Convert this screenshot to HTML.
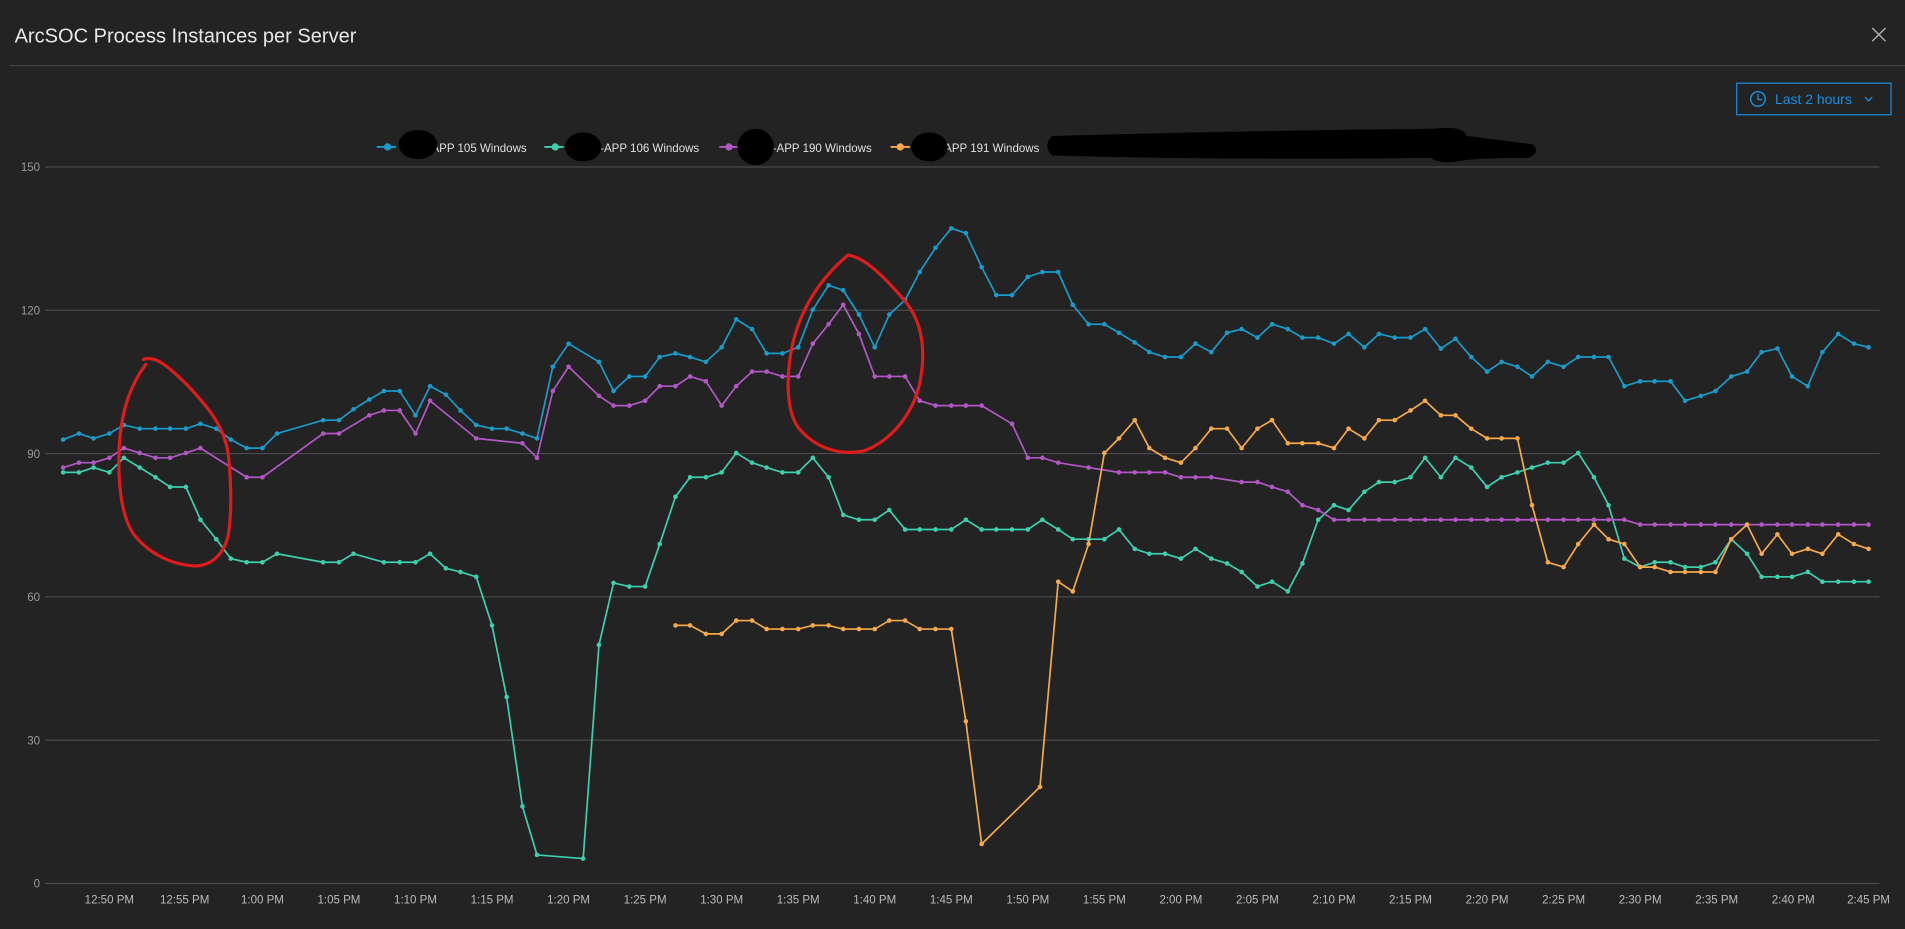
<!DOCTYPE html>
<html><head><meta charset="utf-8"><style>
html,body{margin:0;padding:0;background:#232323;overflow:hidden}
svg{display:block}
text{font-family:"Liberation Sans",sans-serif}
</style></head><body>
<svg width="1905" height="929" viewBox="0 0 1568 765" preserveAspectRatio="none" xmlns="http://www.w3.org/2000/svg">
<defs>
<marker id="mb" markerWidth="4" markerHeight="4" refX="2" refY="2" markerUnits="userSpaceOnUse"><circle cx="2" cy="2" r="1.9" fill="#1a9bc9"/></marker>
<marker id="mt" markerWidth="4" markerHeight="4" refX="2" refY="2" markerUnits="userSpaceOnUse"><circle cx="2" cy="2" r="1.9" fill="#3ecfae"/></marker>
<marker id="mp" markerWidth="4" markerHeight="4" refX="2" refY="2" markerUnits="userSpaceOnUse"><circle cx="2" cy="2" r="1.9" fill="#b258c4"/></marker>
<marker id="mo" markerWidth="4" markerHeight="4" refX="2" refY="2" markerUnits="userSpaceOnUse"><circle cx="2" cy="2" r="1.9" fill="#f5a94a"/></marker>
</defs>
<rect width="1568" height="765" fill="#232323"/>
<text x="12" y="35" font-size="16.5" fill="#e8e8e8">ArcSOC Process Instances per Server</text>
<path d="M1541 23l11 11M1552 23l-11 11" stroke="#aaa" stroke-width="1.2"/>
<line x1="8" y1="54" x2="1568" y2="54" stroke="#444" stroke-width="1"/>
<rect x="1429.5" y="68.5" width="127" height="26" fill="none" stroke="#1a8fe0" stroke-width="1"/>
<circle cx="1447" cy="81.5" r="6" fill="none" stroke="#1a8fe0" stroke-width="1.2"/>
<path d="M1447 77.5v4.5h3.5" fill="none" stroke="#1a8fe0" stroke-width="1.1"/>
<text x="1461" y="85.5" font-size="11.5" fill="#1a8fe0">Last 2 hours</text>
<path d="M1535 80l3 3 3-3" fill="none" stroke="#1a8fe0" stroke-width="1.1"/>
<!-- legend -->
<g font-size="9.5" fill="#e0e0e0">
<line x1="310" y1="121" x2="326" y2="121" stroke="#1a9bc9" stroke-width="1.5"/><circle cx="319" cy="121" r="3" fill="#1a9bc9"/>
<text x="352" y="125">-APP 105 Windows</text>
<line x1="448" y1="121" x2="464" y2="121" stroke="#3ecfae" stroke-width="1.5"/><circle cx="457" cy="121" r="3" fill="#3ecfae"/>
<text x="494" y="125">-APP 106 Windows</text>
<line x1="592" y1="121" x2="608" y2="121" stroke="#b258c4" stroke-width="1.5"/><circle cx="600" cy="121" r="3" fill="#b258c4"/>
<text x="636" y="125">-APP 190 Windows</text>
<line x1="733" y1="121" x2="749" y2="121" stroke="#f5a94a" stroke-width="1.5"/><circle cx="741" cy="121" r="3" fill="#f5a94a"/>
<text x="774" y="125">-APP 191 Windows</text>
</g>
<g fill="#000">
<ellipse cx="344" cy="119" rx="16" ry="12"/>
<ellipse cx="480" cy="121" rx="15" ry="12"/>
<ellipse cx="622" cy="121" rx="15" ry="15"/>
<ellipse cx="765" cy="121" rx="15" ry="12"/>
<path d="M866 112 Q1000 108 1180 106 Q1205 103 1207 112 Q1240 116 1262 119 Q1268 126 1258 130 Q1220 130 1205 132 Q1185 136 1178 130 Q1000 132 866 128 Q858 120 866 112Z"/>
</g>
<!-- grid -->
<g stroke="#4a4a4a" stroke-width="1">
<line x1="37" y1="137.5" x2="1547" y2="137.5"/>
<line x1="37" y1="255.5" x2="1547" y2="255.5"/>
<line x1="37" y1="373.5" x2="1547" y2="373.5"/>
<line x1="37" y1="491.5" x2="1547" y2="491.5"/>
<line x1="37" y1="609.5" x2="1547" y2="609.5"/>
<line x1="37" y1="727.5" x2="1547" y2="727.5"/>
</g>
<g font-size="9.5" fill="#999" text-anchor="end">
<text x="33" y="141">150</text><text x="33" y="259">120</text><text x="33" y="377">90</text><text x="33" y="495">60</text><text x="33" y="613">30</text><text x="33" y="731">0</text>
</g>
<g font-size="9.5" fill="#bbb" text-anchor="middle">
<text x="90" y="744">12:50 PM</text><text x="152" y="744">12:55 PM</text><text x="216" y="744">1:00 PM</text><text x="279" y="744">1:05 PM</text><text x="342" y="744">1:10 PM</text><text x="405" y="744">1:15 PM</text><text x="468" y="744">1:20 PM</text><text x="531" y="744">1:25 PM</text><text x="594" y="744">1:30 PM</text><text x="657" y="744">1:35 PM</text><text x="720" y="744">1:40 PM</text><text x="783" y="744">1:45 PM</text><text x="846" y="744">1:50 PM</text><text x="909" y="744">1:55 PM</text><text x="972" y="744">2:00 PM</text><text x="1035" y="744">2:05 PM</text><text x="1098" y="744">2:10 PM</text><text x="1161" y="744">2:15 PM</text><text x="1224" y="744">2:20 PM</text><text x="1287" y="744">2:25 PM</text><text x="1350" y="744">2:30 PM</text><text x="1413" y="744">2:35 PM</text><text x="1476" y="744">2:40 PM</text><text x="1538" y="744">2:45 PM</text>
</g>
<g fill="none" stroke-width="1.4" stroke-linejoin="round">
<polyline stroke="#1a9bc9" marker-start="url(#mb)" marker-mid="url(#mb)" marker-end="url(#mb)" points="52,362 65,357 77,361 90,357 102,350 115,353 128,353 140,353 153,353 165,349 178,353 190,362 203,369 216,369 228,357 266,346 279,346 291,337 304,329 316,322 329,322 342,342 354,318 367,325 379,338 392,350 405,353 417,353 430,357 442,361 455,302 468,283 493,298 505,322 518,310 531,310 543,294 556,291 568,294 581,298 594,286 606,263 619,271 631,291 644,291 657,286 669,255 682,235 694,239 707,259 720,286 732,259 745,247 757,224 770,204 783,188 795,192 808,220 820,243 833,243 846,228 858,224 871,224 883,251 896,267 909,267 921,274 934,282 946,290 959,294 972,294 984,283 997,290 1010,274 1022,271 1035,278 1047,267 1060,271 1072,278 1085,278 1098,283 1110,275 1123,286 1135,275 1148,278 1161,278 1173,271 1186,287 1198,279 1211,294 1224,306 1236,298 1249,302 1261,310 1274,298 1287,302 1299,294 1312,294 1324,294 1337,318 1350,314 1362,314 1375,314 1387,330 1400,326 1412,322 1425,310 1438,306 1450,290 1463,287 1475,310 1488,318 1500,290 1513,275 1526,283 1538,286"/>
<polyline stroke="#3ecfae" marker-start="url(#mt)" marker-mid="url(#mt)" marker-end="url(#mt)" points="52,389 65,389 77,385 90,389 102,377 115,385 128,393 140,401 153,401 165,428 178,444 190,460 203,463 216,463 228,456 266,463 279,463 291,456 316,463 329,463 342,463 354,456 367,468 379,471 392,475 405,515 417,574 430,664 442,704 480,707 493,531 505,480 518,483 531,483 543,448 556,409 568,393 581,393 594,389 606,373 619,381 631,385 644,389 657,389 669,377 682,393 694,424 707,428 720,428 732,420 745,436 757,436 770,436 783,436 795,428 808,436 820,436 833,436 846,436 858,428 871,436 883,444 896,444 909,444 921,436 934,452 946,456 959,456 972,460 984,452 997,460 1010,464 1022,471 1035,483 1047,479 1060,487 1072,464 1085,428 1098,416 1110,420 1123,405 1135,397 1148,397 1161,393 1173,377 1186,393 1198,377 1211,385 1224,401 1236,393 1249,389 1261,385 1274,381 1287,381 1299,373 1312,393 1324,416 1337,460 1350,467 1362,463 1375,463 1387,467 1400,467 1412,463 1425,444 1438,456 1450,475 1463,475 1475,475 1488,471 1500,479 1513,479 1526,479 1538,479"/>
<polyline stroke="#b258c4" marker-start="url(#mp)" marker-mid="url(#mp)" marker-end="url(#mp)" points="52,385 65,381 77,381 90,377 102,369 115,373 128,377 140,377 153,373 165,369 203,393 216,393 266,357 279,357 304,342 316,338 329,338 342,357 354,330 392,361 430,365 442,377 455,322 468,302 493,326 505,334 518,334 531,330 543,318 556,318 568,310 581,314 594,334 606,318 619,306 631,306 644,310 657,310 669,283 682,267 694,251 707,275 720,310 732,310 745,310 757,330 770,334 783,334 795,334 808,334 833,349 846,377 858,377 871,381 896,385 921,389 934,389 946,389 959,389 972,393 984,393 997,393 1022,397 1035,397 1047,401 1060,405 1072,416 1085,420 1098,428 1110,428 1123,428 1135,428 1148,428 1161,428 1173,428 1186,428 1198,428 1211,428 1224,428 1236,428 1249,428 1261,428 1274,428 1287,428 1299,428 1312,428 1324,428 1337,428 1350,432 1362,432 1375,432 1387,432 1400,432 1412,432 1425,432 1438,432 1450,432 1463,432 1475,432 1488,432 1500,432 1513,432 1526,432 1538,432"/>
<polyline stroke="#f5a94a" marker-start="url(#mo)" marker-mid="url(#mo)" marker-end="url(#mo)" points="556,515 568,515 581,522 594,522 606,511 619,511 631,518 644,518 657,518 669,515 682,515 694,518 707,518 720,518 732,511 745,511 757,518 770,518 783,518 795,594 808,695 856,648 871,479 883,487 896,448 909,373 921,361 934,346 946,369 959,377 972,381 984,369 997,353 1010,353 1022,369 1035,353 1047,346 1060,365 1072,365 1085,365 1098,369 1110,353 1123,361 1135,346 1148,346 1161,338 1173,330 1186,342 1198,342 1211,353 1224,361 1236,361 1249,361 1261,416 1274,463 1287,467 1299,448 1312,432 1324,444 1337,448 1350,467 1362,467 1375,471 1387,471 1400,471 1412,471 1425,444 1438,432 1450,456 1463,440 1475,456 1488,452 1500,456 1513,440 1526,448 1538,452"/>
</g>
<g fill="none" stroke="#e01b1b" stroke-width="2.6" stroke-linecap="round" stroke-linejoin="round">
<path d="M118 296 C128 292 140 303 155 318 C172 336 185 352 188 375 C190 395 191 420 188 440 C185 455 175 466 160 466 C140 465 122 455 110 440 C100 425 97 400 98 370 C99 345 105 320 120 300"/>
<path d="M698 210 C712 212 728 228 745 248 C758 264 762 285 758 310 C754 338 735 362 712 371 C690 376 670 368 657 352 C647 338 647 310 652 285 C658 258 672 232 698 210"/>
</g>
</svg>
</body></html>
